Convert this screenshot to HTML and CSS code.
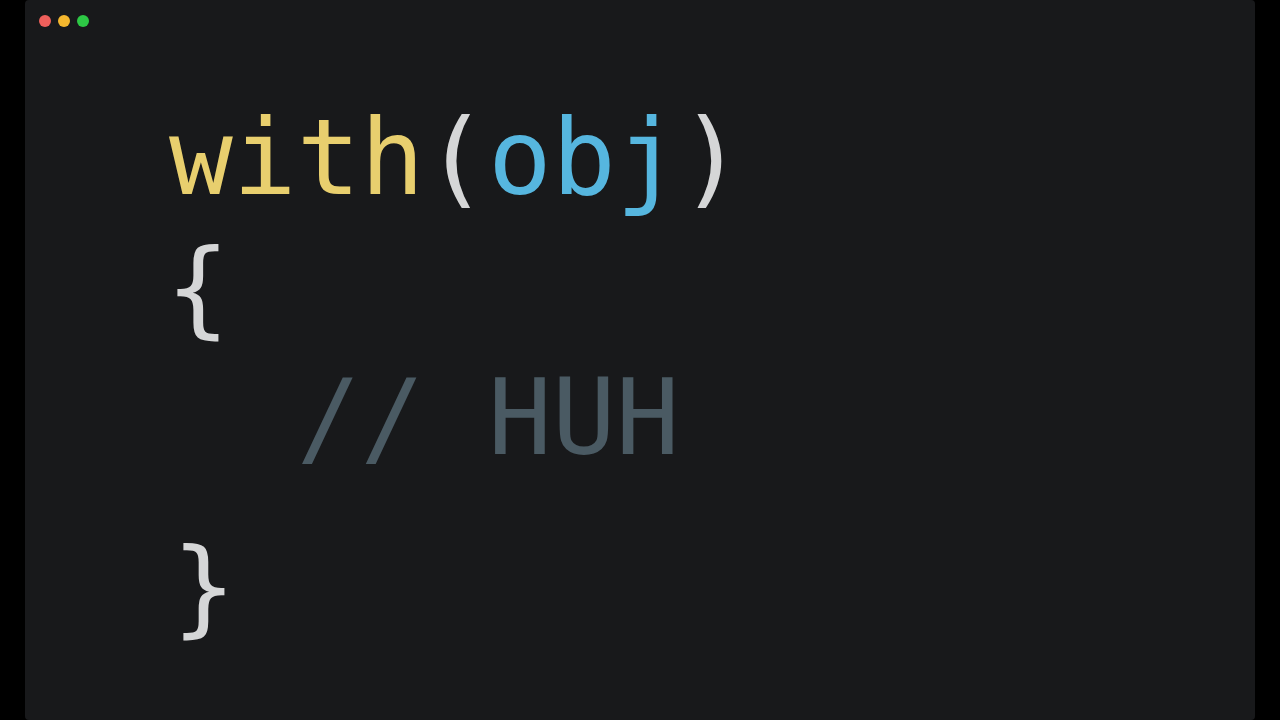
FILE: index.html
```html
<!DOCTYPE html>
<html>
<head>
<meta charset="utf-8">
<link rel="stylesheet" href="styles.css">
</head>
<body>
<div class="window">
  <div class="dots">
    <span class="dot red"></span>
    <span class="dot yellow"></span>
    <span class="dot green"></span>
  </div>
  <pre class="code"><div class="line"><span class="kw">with</span><span class="punc">(</span><span class="var">obj</span><span class="punc">)</span></div><div class="line"><span class="punc open">{</span></div><div class="line"><span class="comment">  // HUH</span></div><div class="line last"><span class="punc close">}</span></div></pre>
</div>
</body>
</html>
```
FILE: styles.css
```css
html, body {
  margin: 0;
  padding: 0;
  background: #000;
  width: 1280px;
  height: 720px;
  overflow: hidden;
}
.window {
  margin-left: 25px;
  width: 1230px;
  height: 720px;
  background: #18191b;
  border-radius: 4px;
  box-sizing: border-box;
  padding-top: 15px;
}
.dots {
  display: flex;
  gap: 7px;
  padding-left: 14px;
}
.dot {
  width: 12px;
  height: 12px;
  border-radius: 50%;
  display: block;
}
.red { background: #ee5f5b; }
.yellow { background: #f4b72e; }
.green { background: #2dc845; }
.code {
  margin: 66px 0 0 144px;
  font-family: "DejaVu Sans Mono", monospace;
  font-size: 106px;
  line-height: 130px;
}
.line { height: 130px; }
.line.last { margin-top: 39px; }
.kw { color: #e8cf6e; }
.var { color: #56b6df; }
.punc { color: #d5d6d7; }
.open { margin-left: -3px; }
.close { padding-left: 3px; }
.comment { color: #4a5a63; }
```
